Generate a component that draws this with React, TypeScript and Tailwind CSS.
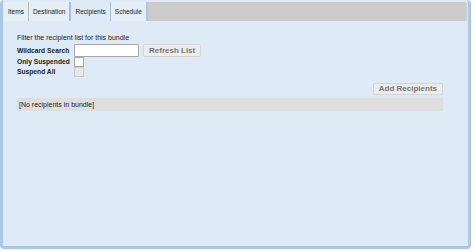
import { useState } from "react";

const TABS = ["Items", "Destination", "Recipients", "Schedule"];

export default function App() {
  const [active] = useState("Recipients");
  const [search, setSearch] = useState("");

  return (
    <div className="h-[251px] w-[474px] bg-white font-['Liberation_Sans',Arial,sans-serif] text-[7px] leading-[10px] text-[#222]">
      <div className="flex h-[249px] w-[471px] flex-col rounded-[4px] border-[3px] border-t-0 border-[#a9c8e6] bg-[#deebf7]">
        {/* tab strip */}
        <div className="mt-[2px] mr-[1px] ml-[1px] flex h-[19px] items-end bg-[#cccccc]">
          {TABS.map((t) => (
            <div
              key={t}
              className={`flex h-[19px] items-center border-r px-[4px] text-[6.5px] text-[#222] ${
                t === active
                  ? "border-l border-[#9dbfe2] bg-[#deebf7]"
                  : "border-[#b8b8b8] bg-[#e6eef6]"
              } ${t === "Schedule" ? "border-r-2 border-r-[#a9c8e6]" : ""}`}
            >
              {t}
            </div>
          ))}
        </div>

        {/* body */}
        <div className="flex flex-col px-[14px] pt-[12px]">
          <div className="mb-[1px]">Filter the recipient list for this bundle</div>
          <div className="grid grid-cols-[57px_auto] items-center">
            <div className="text-[6.7px] font-bold">Wildcard Search</div>
            <div className="flex items-center gap-[4px]">
              <input
                value={search}
                onChange={(e) => setSearch(e.target.value)}
                className="h-[13px] w-[65px] rounded-[1px] border border-[#a8a8a8] bg-white"
              />
              <button className="h-[13px] rounded-[2px] border border-[#d4d4d4] bg-[#ececec] px-[5px] text-[8px] font-bold text-[#777]">
                Refresh List
              </button>
            </div>
            <div className="text-[6.7px] font-bold">Only Suspended</div>
            <div className="h-[10px] w-[10px] border border-[#a8a8a8] bg-white" />
            <div className="text-[6.7px] font-bold">Suspend All</div>
            <div className="h-[10px] w-[10px] border border-[#c8c8c8] bg-[#e8e8e8]" />
          </div>
          <div className="mt-[6px] flex justify-end pr-[11px]">
            <button className="h-[12px] rounded-[2px] border border-[#d4d4d4] bg-[#ececec] px-[5px] text-[8px] font-bold text-[#777]">
              Add Recipients
            </button>
          </div>
          <div className="mt-[3px] mr-[11px] flex h-[13px] items-center bg-[#dedede] px-[2px]">
            [No recipients in bundle]
          </div>
        </div>
      </div>
    </div>
  );
}
